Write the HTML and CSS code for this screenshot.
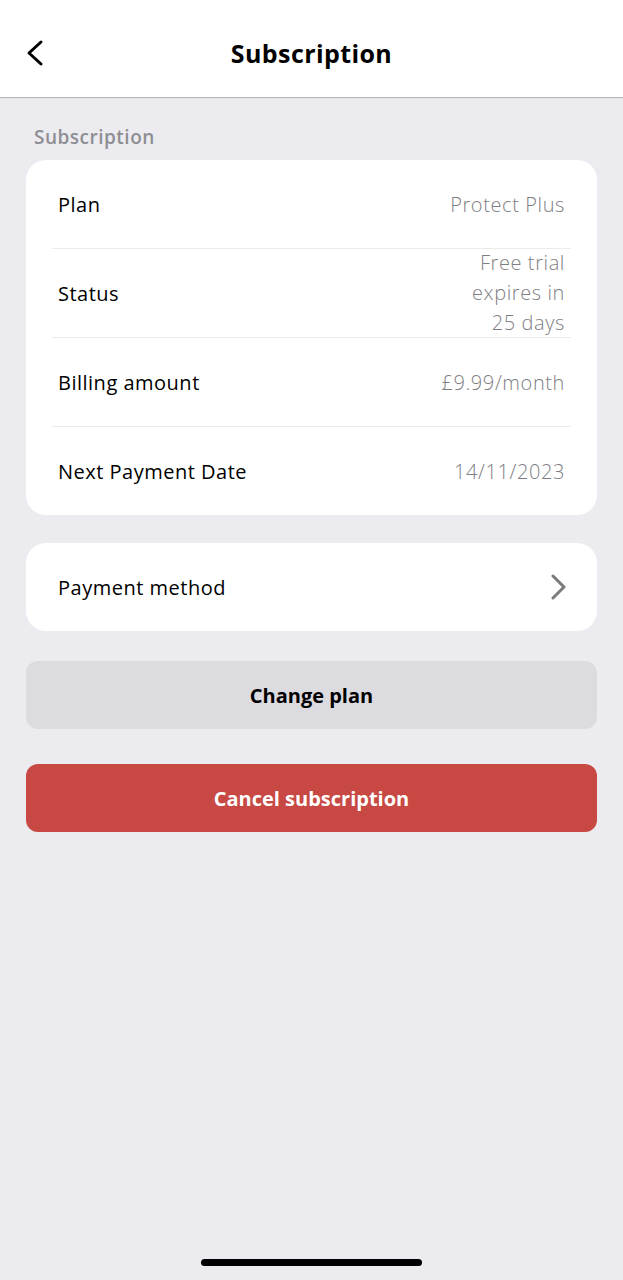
FILE: index.html
```html
<!DOCTYPE html>
<html lang="en">
<head>
<meta charset="utf-8">
<title>Subscription</title>
<link rel="stylesheet" href="styles.css">
</head>
<body>
<div class="page">
  <header class="topbar">
    <button class="back" aria-label="Back">
      <svg width="20" height="28" viewBox="0 0 20 28"><polyline points="15,3 3,14 15,25" fill="none" stroke="#000" stroke-width="3" stroke-linecap="round" stroke-linejoin="round"/></svg>
    </button>
    <h1 class="title">Subscription</h1>
  </header>
  <main class="content">
    <div class="section-label">Subscription</div>
    <section class="card">
      <div class="row"><span class="key">Plan</span><span class="val">Protect Plus</span></div>
      <div class="row"><span class="key">Status</span><span class="val val-wrap">Free trial expires in 25 days</span></div>
      <div class="row"><span class="key">Billing amount</span><span class="val">£9.99/month</span></div>
      <div class="row"><span class="key">Next Payment Date</span><span class="val">14/11/2023</span></div>
    </section>
    <section class="card link-card">
      <div class="row"><span class="key">Payment method</span>
        <svg class="chev" width="18" height="26" viewBox="0 0 18 26"><polyline points="4,2 15,13 4,24" fill="none" stroke="#7b7b7d" stroke-width="3" stroke-linecap="round" stroke-linejoin="round"/></svg>
      </div>
    </section>
    <button class="btn btn-grey">Change plan</button>
    <button class="btn btn-red">Cancel subscription</button>
  </main>
  <div class="home-indicator"></div>
</div>
</body>
</html>
```
FILE: styles.css
```css
* { box-sizing: border-box; }
html, body { margin: 0; padding: 0; }
body {
  background: #ecebf0;
  font-family: "Open Sans", "Noto Sans", sans-serif;
  color: #000;
}
.page {
  min-height: 1280px;
  display: flex;
  flex-direction: column;
}
.topbar {
  height: 97px;
  background: #fff;
  box-shadow: 0 1px 1px rgba(0,0,0,0.22);
  display: flex;
  align-items: center;
  justify-content: center;
  position: relative;
}
.back {
  position: absolute;
  left: 26px;
  top: 39px;
  background: none;
  border: 0;
  padding: 0;
  width: 20px;
  height: 28px;
}
.back svg { display: block; }
.title {
  margin: 0;
  font-size: 25px;
  font-weight: 700;
  letter-spacing: 0.4px;
  line-height: 32px;
  margin-top: 8px;
}
.content {
  padding: 28px 26px 0;
  display: flex;
  flex-direction: column;
}
.section-label {
  padding-left: 8px;
  font-size: 19px;
  font-weight: 600;
  letter-spacing: 0.5px;
  color: #8e8e93;
  line-height: 24px;
  margin-bottom: 11px;
}
.card {
  background: #fff;
  border-radius: 20px;
}
.row {
  margin: 0 26px;
  padding: 0 6px;
  height: 89px;
  border-bottom: 1px solid #ebebeb;
  display: flex;
  align-items: center;
  justify-content: space-between;
}
.row:last-child { border-bottom: 0; height: 88px; }
.key { font-size: 20px; letter-spacing: 0.5px; }
.val {
  font-size: 20px;
  font-weight: 300;
  letter-spacing: 0.6px;
  color: #7e7e82;
  text-align: right;
}
.val-wrap {
  max-width: 104px;
  line-height: 30px;
}
.link-card { margin-top: 28px; }
.chev { display: block; margin-right: -2px; }
.btn {
  border: 0;
  border-radius: 12px;
  height: 68px;
  font-family: inherit;
  font-size: 20px;
  font-weight: 700;
  width: 100%;
}
.btn-grey { margin-top: 30px; background: #dcdbe0; color: #000; }
.btn-red { margin-top: 35px; background: #c84843; color: #fff; }
.home-indicator {
  margin: auto auto 14px;
  width: 221px;
  height: 7px;
  border-radius: 4px;
  background: #000;
}
```
